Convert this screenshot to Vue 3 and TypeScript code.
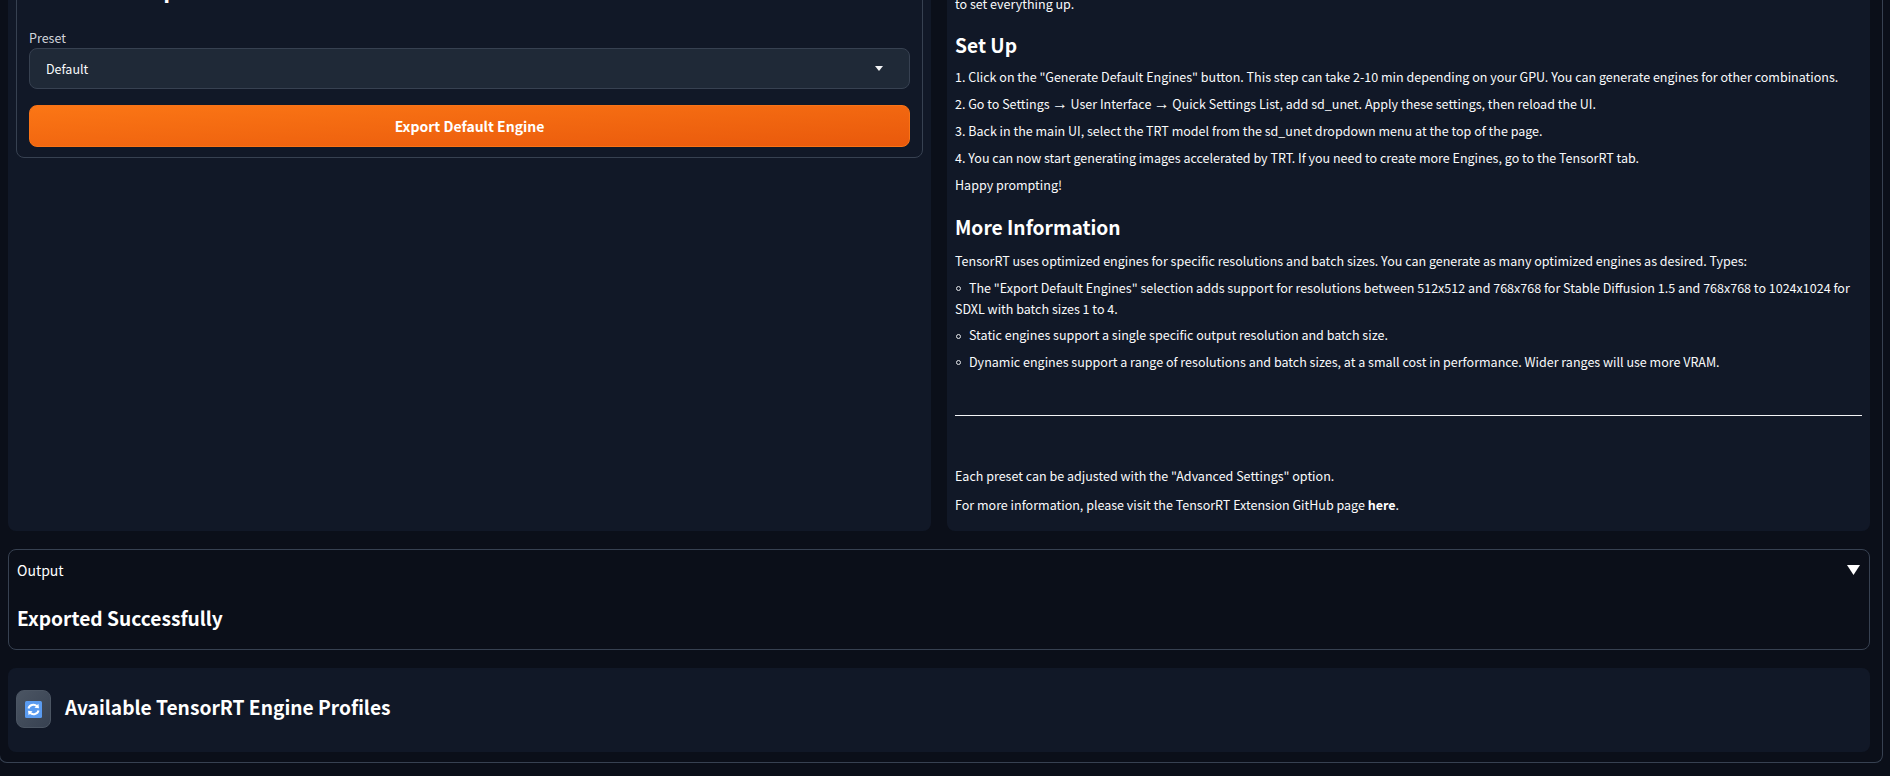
<script setup lang="ts">
const steps: string[] = [
  '1. Click on the "Generate Default Engines" button. This step can take 2-10 min depending on your GPU. You can generate engines for other combinations.',
  '2. Go to Settings → User Interface → Quick Settings List, add sd_unet. Apply these settings, then reload the UI.',
  '3. Back in the main UI, select the TRT model from the sd_unet dropdown menu at the top of the page.',
  '4. You can now start generating images accelerated by TRT. If you need to create more Engines, go to the TensorRT tab.',
]
const types: string[] = [
  'The "Export Default Engines" selection adds support for resolutions between 512x512 and 768x768 for Stable Diffusion 1.5 and 768x768 to 1024x1024 for SDXL with batch sizes 1 to 4.',
  'Static engines support a single specific output resolution and batch size.',
  'Dynamic engines support a range of resolutions and batch sizes, at a small cost in performance. Wider ranges will use more VRAM.',
]
</script>

<template>
  <div class="tab">
    <div class="row">
      <section class="panel">
        <div class="card">
          <h1 class="exporter">TensorRT Exporter</h1>
          <label class="label">Preset</label>
          <div class="select">
            <span>Default</span>
            <svg class="caret" width="8" height="5" viewBox="0 0 8 5"><polygon points="0,0 8,0 4,5" fill="#f3f4f6" /></svg>
          </div>
          <button class="primary">Export Default Engine</button>
        </div>
      </section>
      <section class="panel prose">
        <h1 class="intro-title">TensorRT Extension</h1>
        <p class="intro">Follow the steps below to set everything up.</p>
        <p>to set everything up.</p>
        <h2 class="setup">Set Up</h2>
        <p v-for="s in steps" :key="s"><template v-for="(part, i) in s.split(' → ')" :key="i"><span v-if="i > 0" class="arrow"> → </span>{{ part }}</template></p>
        <p class="happy">Happy prompting!</p>
        <h2 class="more">More Information</h2>
        <p>TensorRT uses optimized engines for specific resolutions and batch sizes. You can generate as many optimized engines as desired. Types:</p>
        <p v-for="t in types" :key="t"><span class="bullet"></span>{{ t }}</p>
        <hr />
        <p class="tight first">Each preset can be adjusted with the "Advanced Settings" option.</p>
        <p class="tight">For more information, please visit the TensorRT Extension GitHub page <strong>here</strong>.</p>
      </section>
    </div>

    <section class="output">
      <div class="output-head">
        <span>Output</span>
        <svg width="13" height="10" viewBox="0 0 13 10"><polygon points="0,0 13,0 6.5,10" fill="#ffffff" /></svg>
      </div>
      <h2 class="success">Exported Successfully</h2>
    </section>

    <section class="profiles">
      <button class="icon-btn" aria-label="Refresh">
        <svg width="17" height="17" viewBox="0 0 17 17">
          <rect x="0" y="0" width="17" height="17" rx="1.5" fill="#5a9bf0" />
          <path d="M3.5 7.5 A5 4.5 0 0 1 12 5.2" fill="none" stroke="#fff" stroke-width="2" />
          <polygon points="9.5,6.8 14,7.2 13.4,2.8" fill="#fff" />
          <path d="M13.5 9.5 A5 4.5 0 0 1 5 11.8" fill="none" stroke="#fff" stroke-width="2" />
          <polygon points="7.5,10.2 3,9.8 3.6,14.2" fill="#fff" />
        </svg>
      </button>
      <h2 class="profiles-title">Available TensorRT Engine Profiles</h2>
    </section>
  </div>
</template>

<style>
html, body {
  margin: 0;
  height: 776px;
  overflow: hidden;
  background: #0b0f19;
}
</style>

<style scoped>
* {
  box-sizing: border-box;
}
.tab {
  --text: #f9fafb;
  width: 1884px;
  margin: -120px 0 0 -1px;
  padding: 0 12px 9px 8px;
  height: 883px;
  display: flex;
  flex-direction: column;
  gap: 18px;
  color: var(--text);
  font-family: "Noto Sans CJK SC", "Liberation Sans", sans-serif;
  font-size: 12.53px;
  line-height: 21px;
  border: 1px solid #374151;
  border-top: none;
  border-radius: 0 0 8px 8px;
}
.row {
  display: grid;
  grid-template-columns: 923px 923px;
  gap: 16px;
  height: 651px;
}
.panel {
  background: #111827;
  border-radius: 8px;
  padding: 8px;
  overflow: hidden;
}
.card {
  border: 1px solid #374151;
  border-radius: 8px;
  padding: 0 12px 10px;
  height: 271px;
  display: flex;
  flex-direction: column;
  justify-content: flex-end;
  margin-top: -1px;
}
.exporter {
  margin: 0 0 24px;
  font-size: 22.5px;
  line-height: 32px;
  font-weight: 600;
  color: #ffffff;
}
.label {
  display: block;
  font-size: 12.5px;
  line-height: 20px;
  color: #d1d5db;
}
.select {
  height: 41px;
  background: #1f2937;
  border: 1px solid #374151;
  border-radius: 8px;
  display: flex;
  align-items: center;
  justify-content: space-between;
  padding: 0 26px 1px 16px;
}
.primary {
  margin-top: 16px;
  height: 42px;
  width: 100%;
  border: 1px solid #f97316;
  border-radius: 8px;
  background: linear-gradient(to bottom right, #fb7615, #e9590c);
  color: #ffffff;
  font: inherit;
  font-size: 14px;
  font-weight: 600;
}
.prose p {
  margin: 0 0 5.8px;
}
.intro-title {
  margin: 25.5px 0 8px;
  font-size: 27px;
  line-height: 40px;
  font-weight: 600;
}
.prose .intro {
  margin-bottom: 10px;
}
.prose h2 {
  font-size: 19.2px;
  line-height: 30px;
  font-weight: 600;
  color: #ffffff;
}
.prose h2.setup {
  margin: 16.5px 0 6.2px;
}
.prose .happy {
  margin-top: 6px;
}
.prose h2.more {
  margin: 17.8px 0 7.5px;
}
.arrow {
  font-family: "Liberation Sans", sans-serif;
  font-size: 16px;
  line-height: 0;
  margin: 0 -2px;
}
.bullet {
  display: inline-block;
  width: 5px;
  height: 5px;
  border: 1px solid #e5e7eb;
  border-radius: 50%;
  margin: 0 8px 2px 1px;
  vertical-align: middle;
}
hr {
  margin: 43px 0 48.5px;
  border: none;
  border-top: 1px solid #f3f4f6;
}
.prose .tight {
  margin-bottom: 7px;
}
.prose .tight.first {
  margin-bottom: 8px;
}
.tight strong {
  font-weight: 600;
  color: #ffffff;
}
.output {
  height: 101px;
  border: 1px solid #374151;
  border-radius: 8px;
  padding: 0 8px;
}
.output-head {
  display: flex;
  align-items: center;
  justify-content: space-between;
  height: 40px;
  font-size: 14px;
  padding-right: 1px;
  color: #ffffff;
}
.success {
  margin: 10px 0 0;
  font-size: 19.2px;
  line-height: 36px;
  font-weight: 600;
  color: #ffffff;
}
.profiles {
  height: 84px;
  background: #111827;
  border-radius: 8px;
  padding: 0 8px;
  display: flex;
  align-items: center;
  gap: 14px;
}
.icon-btn {
  width: 35px;
  height: 38px;
  padding: 0;
  margin-bottom: 2px;
  display: flex;
  align-items: center;
  justify-content: center;
  border: 1px solid #4b5563;
  border-radius: 8px;
  background: linear-gradient(to bottom right, #4b5563, #374151);
}
.profiles-title {
  margin: 0 0 7px;
  font-size: 19.2px;
  line-height: 32px;
  font-weight: 600;
  color: #ffffff;
}
</style>
